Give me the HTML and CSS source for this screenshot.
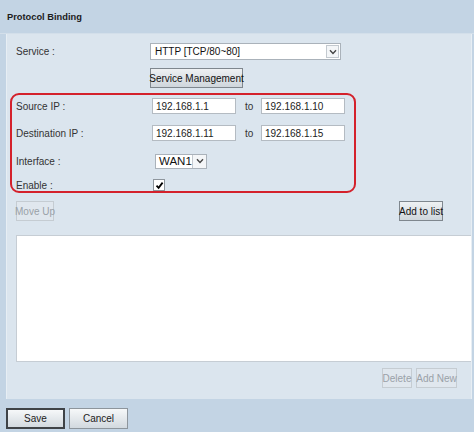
FILE: index.html
```html
<!DOCTYPE html>
<html>
<head>
<meta charset="utf-8">
<title>Protocol Binding</title>
<link rel="stylesheet" href="styles.css">
</head>
<body>
<div class="page">
  <div class="header">Protocol Binding</div>
  <div class="panel">
    <div class="row-service">
      <div class="label">Service :</div>
      <div class="select select-service">
        <span class="select-text">HTTP [TCP/80~80]</span>
        <span class="select-arrow"><svg width="8" height="6" viewBox="0 0 8 6"><path d="M1 1.2 L4 4.4 L7 1.2" fill="none" stroke="#444" stroke-width="1.4"/></svg></span>
      </div>
    </div>
    <div class="row-mgmt">
      <button class="btn btn-mgmt">Service Management</button>
    </div>
    <div class="highlight">
      <div class="field">
        <div class="flabel">Source IP :</div>
        <div class="input">192.168.1.1</div>
        <div class="to">to</div>
        <div class="input">192.168.1.10</div>
      </div>
      <div class="field field-dest">
        <div class="flabel">Destination IP :</div>
        <div class="input">192.168.1.11</div>
        <div class="to">to</div>
        <div class="input">192.168.1.15</div>
      </div>
      <div class="field field-iface">
        <div class="flabel">Interface :</div>
        <div class="select select-iface">
          <span class="select-text">WAN1</span>
          <span class="select-arrow"><svg width="8" height="6" viewBox="0 0 8 6"><path d="M1 1.2 L4 4.4 L7 1.2" fill="none" stroke="#444" stroke-width="1.4"/></svg></span>
        </div>
      </div>
      <div class="field field-enable">
        <div class="flabel">Enable :</div>
        <span class="checkbox"><svg width="9" height="9" viewBox="0 0 9 9"><path d="M1.5 4.6 L3.6 6.8 L7.6 1.6" fill="none" stroke="#000" stroke-width="1.8"/></svg></span>
      </div>
    </div>
    <div class="actions">
      <button class="btn btn-disabled btn-moveup">Move Up</button>
      <button class="btn btn-add">Add to list</button>
    </div>
    <div class="listbox"></div>
    <div class="list-actions">
      <button class="btn btn-disabled btn-delete">Delete</button>
      <button class="btn btn-disabled btn-addnew">Add New</button>
    </div>
  </div>
  <div class="footer">
    <button class="btn btn-foot btn-save">Save</button>
    <button class="btn btn-foot">Cancel</button>
  </div>
</div>
</body>
</html>
```
FILE: styles.css
```css
html, body {
  margin: 0;
  padding: 0;
}
body {
  background: #c3d4e4;
  font-family: "Liberation Sans", Arial, sans-serif;
  font-size: 10px;
  color: #2a2a2a;
}
.page {
  width: 474px;
  height: 432px;
  overflow: hidden;
}
.header {
  height: 33px;
  display: flex;
  align-items: center;
  padding-left: 7px;
  font-weight: bold;
  font-size: 9.3px;
  color: #1c1c1c;
  border-bottom: 1px solid #d3dfea;
}
.panel {
  margin-left: 6px;
  width: 466px;
  height: 365px;
  box-sizing: border-box;
  background: #dbe5ee;
  border-left: 1px solid #e7eef4;
  border-right: 1px solid #e7eef4;
  padding: 9px 0 0 9px;
}
.row-service {
  display: flex;
  align-items: center;
  height: 17px;
}
.label {
  width: 134px;
  color: #333;
}
.select {
  box-sizing: border-box;
  display: flex;
  align-items: center;
  justify-content: space-between;
  background: #fff;
  border: 1px solid #aab2ba;
}
.select-service {
  width: 191px;
  height: 17px;
  padding: 0 1px 0 4px;
  color: #111;
}
.select-arrow {
  box-sizing: border-box;
  width: 13px;
  height: 13px;
  border: 1px solid #c3c9cf;
  background: #f4f6f8;
  display: flex;
  align-items: center;
  justify-content: center;
}
.row-mgmt {
  margin-top: 8px;
  padding-left: 134px;
  height: 20px;
}
.btn {
  box-sizing: border-box;
  height: 20px;
  padding: 0;
  margin: 0;
  font-family: "Liberation Sans", Arial, sans-serif;
  font-size: 10px;
  white-space: nowrap;
  overflow: visible;
  color: #111;
  border: 1px solid #7f878e;
  background: linear-gradient(#eef1f3, #cfd6dc);
  display: inline-flex;
  align-items: center;
  justify-content: center;
}
.btn-mgmt {
  width: 93px;
}
.highlight {
  margin-top: 5px;
  margin-left: -6px;
  width: 346px;
  height: 100px;
  box-sizing: border-box;
  border: 2px solid #d4212b;
  border-radius: 9px;
  padding: 3px 0 0 4px;
}
.field {
  display: flex;
  align-items: center;
  height: 16px;
}
.flabel {
  width: 136px;
  color: #333;
}
.field-dest {
  margin-top: 11px;
}
.field-iface {
  margin-top: 12px;
}
.field-enable {
  margin-top: 10px;
  height: 12px;
}
.input {
  box-sizing: border-box;
  width: 84px;
  height: 16px;
  background: #fff;
  border: 1px solid #b4bbc2;
  padding-left: 3px;
  display: flex;
  align-items: center;
  color: #222;
}
.to {
  width: 25px;
  box-sizing: border-box;
  padding-left: 9px;
  color: #333;
}
.select-iface {
  margin-left: 3px;
  width: 52px;
  height: 15px;
  padding: 0 0 0 3px;
  font-size: 11.5px;
  color: #111;
}
.select-iface .select-arrow {
  height: 13px;
  width: 14px;
  border-top: none;
  border-bottom: none;
  border-right: none;
}
.checkbox {
  margin-left: 1px;
  box-sizing: border-box;
  width: 12px;
  height: 12px;
  border: 1px solid #8e969d;
  background: #fff;
  display: flex;
  align-items: center;
  justify-content: center;
}
.actions {
  margin-top: 8px;
  display: flex;
  justify-content: space-between;
  margin-right: 28px;
  height: 20px;
}
.btn-disabled {
  color: #9aa1a8;
  border: 1px solid #c5ccd2;
  background: #e0e7ee;
}
.btn-moveup {
  width: 38px;
}
.btn-add {
  width: 44px;
}
.listbox {
  margin-top: 14px;
  height: 127px;
  box-sizing: border-box;
  background: #fff;
  border: 1px solid #c6cdd4;
  border-right: none;
}
.list-actions {
  margin-top: 6px;
  display: flex;
  justify-content: flex-end;
  gap: 4px;
  margin-right: 14px;
  height: 20px;
}
.btn-delete {
  width: 30px;
}
.btn-addnew {
  width: 41px;
}
.footer {
  margin-top: 9px;
  padding-left: 6px;
  display: flex;
  gap: 4px;
}
.btn-foot {
  width: 59px;
  height: 21px;
  color: #222;
  border: 1px solid #8d959c;
  background: linear-gradient(#f6f8f9, #d2d9df);
}
.btn-save {
  border: 2px solid #3f4347;
}
```
